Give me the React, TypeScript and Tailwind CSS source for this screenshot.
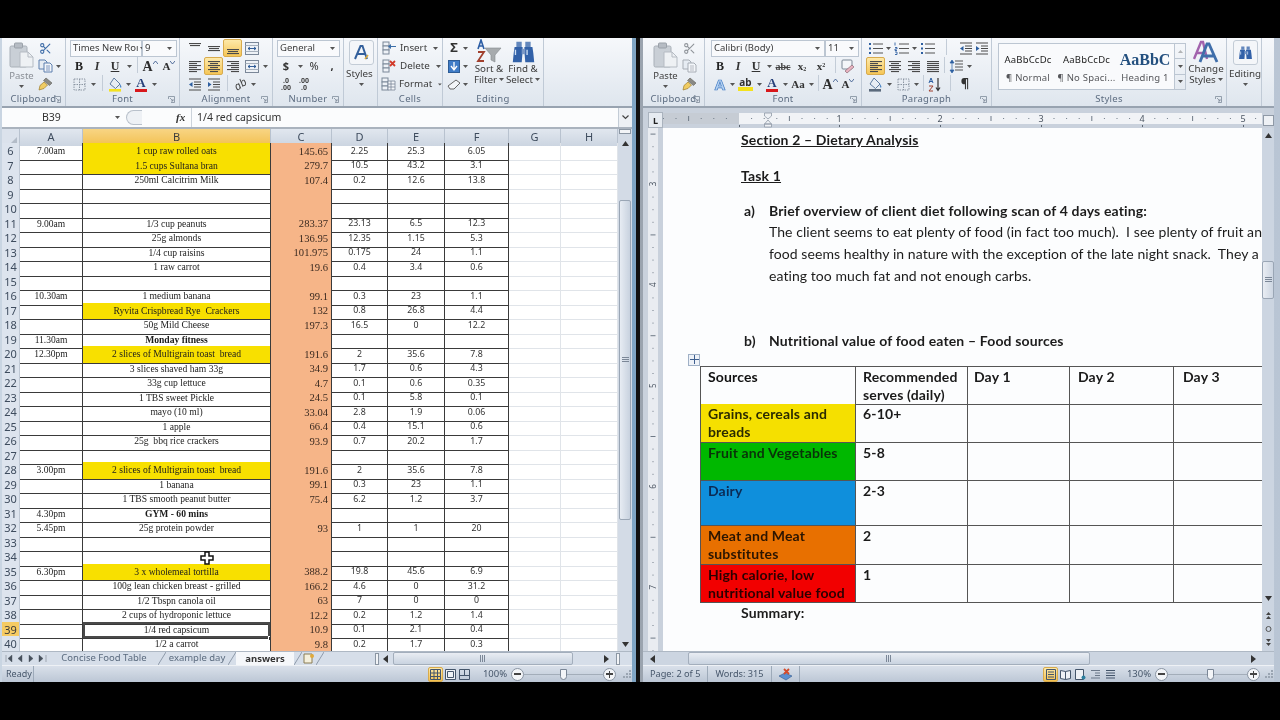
import React from 'react';
import { Scissors } from 'lucide-react';

const ui = 'font-["Noto_Sans",sans-serif]';

const Caret = ({ className = '' }: { className?: string }) => (
  <svg width="5" height="3" viewBox="0 0 5 3" className={className}>
    <path d="M0 0h5L2.5 3z" fill="#555" />
  </svg>
);

const Cell = ({ w = 'w-[18px]', active, children }: { w?: string; active?: boolean; children?: React.ReactNode }) => (
  <div
    className={`${w} h-[18px] flex items-center justify-center shrink-0 rounded-[2px] ${
      active ? 'bg-gradient-to-b from-[#fde9a8] to-[#f5c655] border border-[#d8ab4d]' : ''
    }`}
  >
    {children}
  </div>
);

const CaretCell = ({ w = 'w-[10px]' }: { w?: string }) => (
  <Cell w={w}>
    <Caret />
  </Cell>
);

const Sep = ({ w = 'w-[8px]' }: { w?: string }) => (
  <div className={`${w} h-[18px] flex justify-center shrink-0`}>
    <div className="w-px h-[16px] bg-[#c3ccd7]" />
  </div>
);

const Lines = ({ kind, color = '#4a4a4a' }: { kind: string; color?: string }) => {
  const rows: Record<string, [number, number, number][]> = {
    top: [[1, 1, 12], [2, 3, 10]],
    mid: [[1, 4, 12], [2, 6, 10], [1, 8, 12]],
    bot: [[1, 7, 12], [2, 9, 10], [1, 11, 12]],
    left: [[1, 1, 12], [1, 3, 8], [1, 5, 12], [1, 7, 8], [1, 9, 12], [1, 11, 8]],
    center: [[1, 1, 12], [3, 3, 8], [1, 5, 12], [3, 7, 8], [1, 9, 12], [3, 11, 8]],
    right: [[1, 1, 12], [5, 3, 8], [1, 5, 12], [5, 7, 8], [1, 9, 12], [5, 11, 8]],
    just: [[1, 1, 12], [1, 3, 12], [1, 5, 12], [1, 7, 12], [1, 9, 12], [1, 11, 12]],
  };
  return (
    <svg width="14" height="13" viewBox="0 0 14 13">
      {rows[kind].map(([x, y, w], i) => (
        <rect key={i} x={x} y={y} width={w} height="1.1" fill={color} />
      ))}
    </svg>
  );
};

const PasteIcon = () => (
  <svg width="28" height="26" viewBox="0 0 28 26">
    <rect x="2" y="4" width="17" height="21" rx="1.5" fill="#c9cfd6" stroke="#a9b0b8" />
    <rect x="6.5" y="1" width="8" height="5" rx="1" fill="#b6bcc4" stroke="#9aa1a9" />
    <path d="M12 10h8l5 5v10H12z" fill="#eef1f4" stroke="#b5bbc3" />
    <path d="M20 10v5h5" fill="none" stroke="#b5bbc3" />
  </svg>
);

const CopyIcon = ({ color = '#6f8fb8' }: { color?: string }) => (
  <svg width="15" height="14" viewBox="0 0 15 14">
    <path d="M1 1h6l2 2v7H1z" fill="#e6ecf3" stroke={color} />
    <path d="M6 4h6l2 2v7H6z" fill="#f3f6fa" stroke={color} />
    <path d="M8 7h4M8 9h4M8 11h4" stroke={color} strokeWidth=".8" />
  </svg>
);

const Painter = () => (
  <svg width="15" height="15" viewBox="0 0 15 15">
    <path d="M8 1l6 5-2.5 2.5-6-5z" fill="#8a8a86" stroke="#5f5f5a" strokeWidth=".6" />
    <path d="M6 5L2 8.5 1 13l5-1.5 3.5-3.5z" fill="#f0cc63" stroke="#9d7d2a" strokeWidth=".7" />
  </svg>
);

const BorderIcon = () => (
  <svg width="13" height="13" viewBox="0 0 13 13" fill="none" stroke="#8c96a3" strokeWidth="1" strokeDasharray="1.5 1">
    <rect x="1" y="1" width="11" height="11" />
    <path d="M6.5 1v11M1 6.5h11" />
  </svg>
);

const Bucket = ({ bar = '#f4e21d' }: { bar?: string }) => (
  <svg width="15" height="15" viewBox="0 0 15 15">
    <path d="M6 1l6 6-4.5 4.5L2 7z" fill="#e8edf3" stroke="#4f6f96" strokeWidth=".9" />
    <path d="M12 7c1 1.5 2 3 1.2 3.6S11.4 9.6 12 7z" fill="#4f88c6" />
    <rect x="1" y="12" width="12" height="2.6" fill={bar} />
  </svg>
);

const FontColor = () => (
  <div className={`flex flex-col items-center leading-none font-["Liberation_Serif",serif]`}>
    <span className="text-[13px] font-bold text-[#27407a] leading-[11px]">A</span>
    <span className="w-[12px] h-[3px] bg-[#d8171b] mt-px" />
  </div>
);

const GrowFont = ({ small }: { small?: boolean }) => (
  <div className="flex items-start">
    <span className={`font-["Liberation_Serif",serif] font-bold text-[#2d2d2d] ${small ? 'text-[11px]' : 'text-[14px]'} leading-[13px]`}>A</span>
    <svg width="5" height="3" viewBox="0 0 5 3" className="mt-px">
      <path d={small ? 'M0 0l2.5 3L5 0' : 'M0 3l2.5-3L5 3'} fill="none" stroke="#2e4f85" strokeWidth=".8" />
    </svg>
  </div>
);

const Merge = () => (
  <svg width="14" height="13" viewBox="0 0 14 13">
    <rect x="0.5" y="0.5" width="13" height="12" fill="#eef2f7" stroke="#7a8798" />
    <path d="M3 6.5h8M3 6.5l2-1.5M3 6.5l2 1.5M11 6.5l-2-1.5M11 6.5l-2 1.5" stroke="#1f4f8f" strokeWidth=".9" fill="none" />
    <path d="M.5 3.5h13M.5 9.5h13" stroke="#a6b0bc" />
  </svg>
);

const Indent = ({ out }: { out?: boolean }) => (
  <svg width="14" height="13" viewBox="0 0 14 13">
    <path d="M1 1h12M6 4h7M6 6.5h7M6 9h7M1 12h12" stroke="#4a4a4a" strokeWidth="1.1" />
    <path d={out ? 'M4.5 4L1 6.5 4.5 9z' : 'M1 4l3.5 2.5L1 9z'} fill="#2c5ea0" />
  </svg>
);

const Label = ({ text, launcher = true }: { text: string; launcher?: boolean }) => (
  <div className={`h-[14px] flex items-center justify-center relative text-[9.5px] tracking-[0.3px] text-[#5c6c80] ${ui}`}>
    {text}
    {launcher && (
      <svg width="7" height="7" viewBox="0 0 7 7" className="absolute right-[4px] top-[4px]" fill="none" stroke="#7f8c9b">
        <path d="M.5 3V.5H6.5V6.5H3M2 2l3 3M3 5h2V3" strokeWidth=".8" />
      </svg>
    )}
  </div>
);

const Group = ({ w, label, launcher, pad = 'pl-[4px]', children }: { w: string; label: string; launcher?: boolean; pad?: string; children: React.ReactNode }) => (
  <div className={`${w} shrink-0 flex flex-col border-r border-[#c0cad6]`}>
    <div className={`h-[54px] pt-px ${pad}`}>{children}</div>
    <Label text={label} launcher={launcher} />
  </div>
);

const Row = ({ children, className = '' }: { children: React.ReactNode; className?: string }) => (
  <div className={`flex items-center h-[18px] ${className}`}>{children}</div>
);

const Combo = ({ text, w, font = 'text-[9.5px]' }: { text: string; w: string; font?: string }) => (
  <div className={`${w} h-[17px] bg-[#f9fafc] border border-[#bcc6d2] flex items-center justify-between pl-[2px] pr-[4px] gap-[2px] text-[#3a3a3a] ${font} ${ui} shrink-0`}>
    <span className="whitespace-nowrap">{text}</span>
    <Caret className="shrink-0" />
  </div>
);

const ClipboardGroup = ({ w, muted }: { w: string; muted?: boolean }) => (
  <Group w={w} label="Clipboard" pad={muted ? 'pl-[5px]' : 'pl-[2px]'}>
    <div className="flex">
      <div className="w-[35px] flex flex-col items-center">
        <div className="mt-[3px] h-[27px]">
          <PasteIcon />
        </div>
        <span className={`text-[9.5px] leading-[13px] ${muted ? 'text-[#3f3f3f]' : 'text-[#8a8f96]'} ${ui}`}>Paste</span>
        <Caret className="mt-[3px]" />
      </div>
      <div className="flex flex-col -ml-[3px]">
        <Row><Cell><Scissors size={13} className={muted ? 'text-[#8f949a]' : 'text-[#3f6da8]'} /></Cell></Row>
        <Row><Cell><CopyIcon color={muted ? '#a7adb5' : '#5d7fae'} /></Cell>{!muted && <CaretCell w="w-[8px]" />}</Row>
        <Row><Cell><Painter /></Cell></Row>
      </div>
    </div>
  </Group>
);

const Binoculars = ({ size = 28, color = '#3261a8' }: { size?: number; color?: string }) => (
  <svg width={size} height={size} viewBox="0 0 28 28">
    <path d="M6 3h6v6H6zM16 3h6v6h-6z" fill={color} opacity=".75" />
    <path d="M4 9h9v5l-1 12H2l1-10zM15 9h9l1 7 1 10H16l-1-12z" fill={color} />
    <path d="M12 11h4v6h-4z" fill="#7c99c6" />
    <path d="M5 12v6M18 12v6" stroke="#cfe0f5" strokeWidth="1.5" />
  </svg>
);

const SmallLabelBtn = ({ icon, text }: { icon: React.ReactNode; text: string }) => (
  <Row className="gap-[3px]">
    <div className="w-[16px] flex justify-center">{icon}</div>
    <span className={`text-[9.8px] text-[#3b3b3b] ${ui}`}>{text}</span>
    <Caret className="ml-[3px]" />
  </Row>
);

const SheetIcon = ({ kind }: { kind: 'insert' | 'delete' | 'format' }) => (
  <svg width="15" height="14" viewBox="0 0 15 14">
    <rect x="1" y="1" width="6" height="4" fill="#eef2f7" stroke="#7a8798" />
    <rect x="1" y="5" width="6" height="4" fill="#eef2f7" stroke="#7a8798" />
    <rect x="1" y="9" width="6" height="4" fill="#eef2f7" stroke="#7a8798" />
    {kind === 'insert' && <path d="M14 5H9V3l-3 2.5L9 8V6h5z" fill="#3b6ea8" />}
    {kind === 'delete' && <path d="M8 2l5 5m0-5L8 7" stroke="#d23a2a" strokeWidth="1.8" />}
    {kind === 'format' && <path d="M7 4h7v9H7z M7 7h7 M7 10h7 M10 4v9" fill="#f4f6f9" stroke="#7a8798" strokeWidth=".8" />}
  </svg>
);

const ExcelRibbon = () => (
  <div className="h-[70px] flex bg-gradient-to-b from-[#f6f8fb] to-[#dfe6ee] border-b-2 border-[#98a3b0] shrink-0">
    <ClipboardGroup w="w-[64px]" />
    <Group w="w-[114px]" label="Font">
      <div className="flex h-[18px] items-end">
        <Combo text="Times New Roı" w="w-[72px]" />
        <Combo text="9" w="w-[35px]" />
      </div>
      <Row>
        <Cell><span className={`text-[12px] font-bold font-["Liberation_Serif",serif] text-[#222]`}>B</span></Cell>
        <Cell><span className={`text-[12px] font-bold italic font-["Liberation_Serif",serif] text-[#333]`}>I</span></Cell>
        <Cell><span className={`text-[12px] font-bold underline font-["Liberation_Serif",serif] text-[#333]`}>U</span></Cell>
        <CaretCell />
        <Sep w="w-[6px]" />
        <Cell w="w-[20px]"><GrowFont /></Cell>
        <Cell><GrowFont small /></Cell>
      </Row>
      <Row>
        <Cell><BorderIcon /></Cell>
        <CaretCell />
        <Sep />
        <Cell><Bucket /></Cell>
        <CaretCell w="w-[8px]" />
        <Cell><FontColor /></Cell>
        <CaretCell w="w-[8px]" />
      </Row>
    </Group>
    <Group w="w-[93px]" label="Alignment" pad="pl-[5px]">
      <Row>
        <Cell w="w-[19px]"><Lines kind="top" /></Cell>
        <Cell w="w-[19px]"><Lines kind="mid" /></Cell>
        <Cell w="w-[19px]" active><Lines kind="bot" /></Cell>
        <Cell w="w-[19px]"><Merge /></Cell>
      </Row>
      <Row>
        <Cell w="w-[19px]"><Lines kind="left" /></Cell>
        <Cell w="w-[19px]" active><Lines kind="center" /></Cell>
        <Cell w="w-[19px]"><Lines kind="right" /></Cell>
        <Cell w="w-[19px]"><Merge /></Cell>
        <CaretCell w="w-[8px]" />
      </Row>
      <Row>
        <Cell w="w-[19px]"><Indent out /></Cell>
        <Cell w="w-[19px]"><Indent /></Cell>
        <Sep />
        <Cell><span className={`text-[11px] italic text-[#444] rotate-[-35deg] ${ui}`}>ab</span></Cell>
        <CaretCell w="w-[8px]" />
      </Row>
    </Group>
    <Group w="w-[71px]" label="Number">
      <div className="flex h-[18px] items-end">
        <Combo text="General" w="w-[63px]" />
      </div>
      <Row>
        <Cell><span className={`text-[11px] font-bold text-[#333] ${ui}`}>$</span></Cell>
        <CaretCell />
        <Cell><span className={`text-[11px] text-[#333] ${ui}`}>%</span></Cell>
        <Cell><span className={`text-[11px] font-bold text-[#333] ${ui}`}>,</span></Cell>
      </Row>
      <Row>
        <Cell><span className={`text-[7px] leading-[7px] font-bold text-[#444] text-center ${ui}`}>.0<br />.00</span></Cell>
        <Cell><span className={`text-[7px] leading-[7px] font-bold text-[#444] text-center ${ui}`}>.00<br />.0</span></Cell>
      </Row>
    </Group>
    <Group w="w-[34px]" label="" launcher={false} pad="pl-[5px]">
      <div className="w-[25px] h-[25px] mt-[1px] rounded-[3px] border border-[#c3ccd6] bg-[#f4f6f9] flex items-center justify-center">
        <svg width="17" height="17" viewBox="0 0 17 17" fill="none">
          <path d="M2 15L7.5 2h2L14 15M4.5 10h7" stroke="#34609c" strokeWidth="2" />
          <path d="M12 15l3-4" stroke="#d9a93f" strokeWidth="1.5" />
        </svg>
      </div>
      <div className={`text-[9.8px] leading-[13px] mt-[2px] text-[#3b3b3b] -ml-[3px] ${ui}`}>Styles</div>
      <Caret className="mt-[3px] ml-[10px]" />
    </Group>
    <Group w="w-[65px]" label="Cells" launcher={false} pad="pl-[3px]">
      <SmallLabelBtn icon={<SheetIcon kind="insert" />} text="Insert" />
      <SmallLabelBtn icon={<SheetIcon kind="delete" />} text="Delete" />
      <SmallLabelBtn icon={<SheetIcon kind="format" />} text="Format" />
    </Group>
    <Group w="w-[101px]" label="Editing" launcher={false} pad="pl-[4px]">
      <div className="flex">
        <div className="w-[26px] flex flex-col">
          <Row><Cell w="w-[14px]"><span className={`text-[13px] font-bold text-[#333] ${ui}`}>Σ</span></Cell><CaretCell w="w-[8px]" /></Row>
          <Row>
            <Cell w="w-[14px]">
              <svg width="12" height="13" viewBox="0 0 12 13"><rect x=".5" y=".5" width="11" height="12" fill="#3f7cc7" stroke="#2d5c96" /><path d="M6 2v7M3 6l3 4 3-4" stroke="#fff" strokeWidth="1.3" fill="none" /></svg>
            </Cell>
            <CaretCell w="w-[8px]" />
          </Row>
          <Row>
            <Cell w="w-[14px]">
              <svg width="14" height="11" viewBox="0 0 14 11"><path d="M9 1l4 3-6 6H3L1 7z" fill="#f3f5f8" stroke="#666" /></svg>
            </Cell>
            <CaretCell w="w-[8px]" />
          </Row>
        </div>
        <div className="w-[34px] flex flex-col items-center -ml-[1px]">
          <svg width="26" height="25" viewBox="0 0 26 25">
            <path d="M9 9h16l-6 7v7l-4-2v-5z" fill="#a7abae" stroke="#85898d" strokeWidth=".6" />
            <path d="M2 10L5 1l3 9M3 7h4" stroke="#2d5ea5" strokeWidth="1.6" fill="none" />
            <path d="M2 13h6l-6 9h6" stroke="#a1402e" strokeWidth="1.8" fill="none" />
          </svg>
          <span className={`text-[9.8px] leading-[10px] text-[#3b3b3b] whitespace-nowrap ${ui}`}>Sort &amp;</span>
          <span className={`text-[9.8px] leading-[11px] text-[#3b3b3b] whitespace-nowrap flex items-center gap-[2px] ${ui}`}>Filter <Caret /></span>
        </div>
        <div className="w-[34px] flex flex-col items-center">
          <Binoculars size={25} />
          <span className={`text-[9.8px] leading-[10px] text-[#3b3b3b] whitespace-nowrap ${ui}`}>Find &amp;</span>
          <span className={`text-[9.8px] leading-[11px] text-[#3b3b3b] whitespace-nowrap flex items-center gap-[2px] ${ui}`}>Select <Caret /></span>
        </div>
      </div>
    </Group>
  </div>
);

const FormulaBar = () => (
  <div className={`h-[21px] flex items-center bg-[#fbfcfd] border-b-2 border-[#aab3be] text-[#333] shrink-0 ${ui}`}>
    <div className="w-[112px] flex items-center pl-[40px] text-[10.5px]">B39</div>
    <Caret className="ml-[1px]" />
    <div className="ml-[6px] w-[16px] h-[15px] rounded-l-full border border-r-0 border-[#b9c1cb] bg-[#eef1f5] shrink-0" />
    <div className="ml-[34px] w-[15px] text-[11px] italic font-bold font-['Liberation_Serif',serif] shrink-0">fx</div>
    <div className="flex-1 pl-[5px] text-[10.5px] border-l border-[#ccd3db] h-full flex items-center">1/4 red capsicum</div>
    <div className="w-[14px] h-full flex items-center justify-center bg-[#edf0f4] border-l border-[#c3ccd6]">
      <svg width="7" height="5" viewBox="0 0 7 5"><path d="M.5 .5l3 3 3-3" fill="none" stroke="#444" strokeWidth="1.2" /></svg>
    </div>
  </div>
);

type SheetRow = { n: number; t?: string; f?: string; c?: string; d?: string; e?: string; g?: string; y?: boolean; b?: boolean };

const rows: SheetRow[] = [
  { n: 6, t: '7.00am', f: '1 cup raw rolled oats', c: '145.65', d: '2.25', e: '25.3', g: '6.05', y: true },
  { n: 7, f: '1.5 cups Sultana bran', c: '279.7', d: '10.5', e: '43.2', g: '3.1', y: true },
  { n: 8, f: '250ml Calcitrim Milk', c: '107.4', d: '0.2', e: '12.6', g: '13.8' },
  { n: 9 },
  { n: 10 },
  { n: 11, t: '9.00am', f: '1/3 cup peanuts', c: '283.37', d: '23.13', e: '6.5', g: '12.3' },
  { n: 12, f: '25g almonds', c: '136.95', d: '12.35', e: '1.15', g: '5.3' },
  { n: 13, f: '1/4 cup raisins', c: '101.975', d: '0.175', e: '24', g: '1.1' },
  { n: 14, f: '1 raw carrot', c: '19.6', d: '0.4', e: '3.4', g: '0.6' },
  { n: 15 },
  { n: 16, t: '10.30am', f: '1 medium banana', c: '99.1', d: '0.3', e: '23', g: '1.1' },
  { n: 17, f: 'Ryvita Crispbread Rye  Crackers', c: '132', d: '0.8', e: '26.8', g: '4.4', y: true },
  { n: 18, f: '50g Mild Cheese', c: '197.3', d: '16.5', e: '0', g: '12.2' },
  { n: 19, t: '11.30am', f: 'Monday fitness', b: true },
  { n: 20, t: '12.30pm', f: '2 slices of Multigrain toast  bread', c: '191.6', d: '2', e: '35.6', g: '7.8', y: true },
  { n: 21, f: '3 slices shaved ham 33g', c: '34.9', d: '1.7', e: '0.6', g: '4.3' },
  { n: 22, f: '33g cup lettuce', c: '4.7', d: '0.1', e: '0.6', g: '0.35' },
  { n: 23, f: '1 TBS sweet Pickle', c: '24.5', d: '0.1', e: '5.8', g: '0.1' },
  { n: 24, f: 'mayo (10 ml)', c: '33.04', d: '2.8', e: '1.9', g: '0.06' },
  { n: 25, f: '1 apple', c: '66.4', d: '0.4', e: '15.1', g: '0.6' },
  { n: 26, f: '25g  bbq rice crackers', c: '93.9', d: '0.7', e: '20.2', g: '1.7' },
  { n: 27 },
  { n: 28, t: '3.00pm', f: '2 slices of Multigrain toast  bread', c: '191.6', d: '2', e: '35.6', g: '7.8', y: true },
  { n: 29, f: '1 banana', c: '99.1', d: '0.3', e: '23', g: '1.1' },
  { n: 30, f: '1 TBS smooth peanut butter', c: '75.4', d: '6.2', e: '1.2', g: '3.7' },
  { n: 31, t: '4.30pm', f: 'GYM - 60 mins', b: true },
  { n: 32, t: '5.45pm', f: '25g protein powder', c: '93', d: '1', e: '1', g: '20' },
  { n: 33 },
  { n: 34 },
  { n: 35, t: '6.30pm', f: '3 x wholemeal tortilla', c: '388.2', d: '19.8', e: '45.6', g: '6.9', y: true },
  { n: 36, f: '100g lean chicken breast - grilled', c: '166.2', d: '4.6', e: '0', g: '31.2' },
  { n: 37, f: '1/2 Tbspn canola oil', c: '63', d: '7', e: '0', g: '0' },
  { n: 38, f: '2 cups of hydroponic lettuce', c: '12.2', d: '0.2', e: '1.2', g: '1.4' },
  { n: 39, f: '1/4 red capsicum', c: '10.9', d: '0.1', e: '2.1', g: '0.4' },
  { n: 40, f: '1/2 a carrot', c: '9.8', d: '0.2', e: '1.7', g: '0.3' },
];

const gridCols = 'grid grid-cols-[18px_63px_188px_61px_56px_57px_64px_52px_57px]';
const serif = 'font-["Liberation_Serif",serif]';
const line = 'border-b border-[#3a3a3a]';

const ColHeader = ({ t, on }: { t: string; on?: boolean }) => (
  <div
    className={`flex items-center justify-center text-[11px] border-r border-[#b8c2cf] ${
      on ? 'bg-gradient-to-b from-[#f8d583] to-[#f2c04d] text-[#3c3c3c]' : 'bg-gradient-to-b from-[#e1e7ef] to-[#ccd5e1] text-[#3e4c5e]'
    }`}
  >
    {t}
  </div>
);

const Sheet = () => (
  <div className="flex flex-1 min-h-0">
    <div className={`flex-1 min-w-0 flex flex-col overflow-hidden bg-white ${ui}`}>
      <div className={`${gridCols} h-[14px] shrink-0`}>
        <div className="bg-[#dbe2ec] border-r border-[#b8c2cf] flex items-end justify-end p-[2px]">
          <svg width="7" height="7" viewBox="0 0 7 7"><path d="M7 0v7H0z" fill="#b3bcc8" /></svg>
        </div>
        {['A', 'B', 'C', 'D', 'E', 'F', 'G', 'H'].map((c) => (
          <ColHeader key={c} t={c} on={c === 'B'} />
        ))}
      </div>
      <div className="overflow-hidden">
        {rows.map((r) => (
          <div key={r.n} className={`${gridCols} h-[14.5px] relative`}>
            <div
              className={`flex items-center justify-center text-[11px] border-b border-r border-[#bfc8d4] ${
                r.n === 39 ? 'bg-[#f6cb62] text-[#3a3a3a]' : 'bg-[#dde4ee] text-[#3e4c5e]'
              }`}
            >
              {r.n}
            </div>
            <div className={`flex items-center justify-center text-[9.5px] text-[#222] ${serif} ${line} border-r`}>{r.t}</div>
            <div
              className={`relative flex items-center justify-center whitespace-pre text-[9.6px] text-[#1c1c1c] ${serif} ${line} border-r ${
                r.y ? 'bg-[#f8e000]' : ''
              } ${r.b ? 'font-bold' : ''}`}
            >
              {r.f}
              {r.n === 39 && <div className="absolute inset-0 border-2 border-[#4a4a4a]" />}
              {r.n === 39 && <div className="absolute right-[-3px] bottom-[-3px] w-[5px] h-[5px] bg-[#333] border border-white" />}
              {r.n === 34 && (
                <svg width="14" height="14" viewBox="0 0 14 14" className="absolute left-[117px] top-[2px] z-10">
                  <path d="M5 1h4v4h4v4H9v4H5V9H1V5h4z" fill="#fff" stroke="#111" strokeWidth="1.5" />
                </svg>
              )}
            </div>
            <div className={`flex items-center justify-end pr-[3px] text-[10.6px] text-[#3a2a20] bg-[#f6b588] ${serif} border-r border-[#3a3a3a]`}>{r.c}</div>
            <div className={`flex items-center justify-center text-[8.8px] text-[#333] ${line} border-r`}>{r.d}</div>
            <div className={`flex items-center justify-center text-[8.8px] text-[#333] ${line} border-r`}>{r.e}</div>
            <div className={`flex items-center justify-center text-[8.8px] text-[#333] ${line} border-r`}>{r.g}</div>
            <div className="border-b border-r border-[#e0e4e9]" />
            <div className="border-b border-r border-[#e0e4e9]" />
          </div>
        ))}
      </div>
    </div>
    <div className="w-[14px] shrink-0 bg-[#d3dbe6] flex flex-col items-center">
      <div className="w-[12px] h-[5px] bg-[#f2f4f7] border border-[#8b96a3] shrink-0" />
      <svg width="7" height="5" viewBox="0 0 7 5" className="mt-[7px] shrink-0"><path d="M3.5 0L7 5H0z" fill="#333" /></svg>
      <div className="mt-[54px] w-[12px] h-[320px] rounded-[2px] bg-gradient-to-r from-[#e7ecf3] to-[#c8d2df] border border-[#9aa6b5] flex items-center justify-center shrink-0">
        <svg width="7" height="6" viewBox="0 0 7 6" stroke="#7b8797"><path d="M0 .5h7M0 2.5h7M0 4.5h7" /></svg>
      </div>
      <div className="flex-1" />
      <svg width="7" height="5" viewBox="0 0 7 5" className="mb-[4px] shrink-0"><path d="M0 0h7L3.5 5z" fill="#333" /></svg>
    </div>
  </div>
);

const ViewBtn = ({ active, children }: { active?: boolean; children: React.ReactNode }) => (
  <div
    className={`w-[15px] h-[15px] flex items-center justify-center shrink-0 ${
      active ? 'bg-gradient-to-b from-[#fde9a8] to-[#f3c04c] border border-[#d8ab4d] rounded-[2px]' : ''
    }`}
  >
    {children}
  </div>
);

const ZoomSlider = ({ pct, w, thumb }: { pct: string; w: string; thumb: string }) => (
  <div className={`flex items-center ${ui}`}>
    <span className="text-[9.5px] text-[#47576b] w-[32px] text-center">{pct}</span>
    <div className="w-[13px] h-[13px] rounded-full border border-[#8a95a3] bg-[#f3f5f8] flex items-center justify-center shrink-0">
      <div className="w-[7px] h-[1.5px] bg-[#444]" />
    </div>
    <div className={`${w} h-[13px] flex items-center relative`}>
      <div className="w-full h-px bg-[#a3adb9]" />
      <div className={`absolute ${thumb} top-[1px] w-[7px] h-[11px] bg-[#f3f5f8] border border-[#7a8696] rounded-b-[4px]`} />
    </div>
    <div className="w-[13px] h-[13px] rounded-full border border-[#8a95a3] bg-[#f3f5f8] flex items-center justify-center relative shrink-0">
      <div className="w-[7px] h-[1.5px] bg-[#444]" />
      <div className="absolute w-[1.5px] h-[7px] bg-[#444]" />
    </div>
  </div>
);

const Grip = () => (
  <svg width="10" height="10" viewBox="0 0 10 10" className="shrink-0" fill="#9aa5b2">
    <rect x="7" y="1" width="2" height="2" /><rect x="4" y="4" width="2" height="2" /><rect x="7" y="4" width="2" height="2" /><rect x="1" y="7" width="2" height="2" /><rect x="4" y="7" width="2" height="2" /><rect x="7" y="7" width="2" height="2" />
  </svg>
);

const TabSlant = () => (
  <svg width="8" height="13" viewBox="0 0 8 13" className="shrink-0"><path d="M0 13L8 0" stroke="#8f9bab" fill="none" /></svg>
);

const NavTri = ({ d }: { d: string }) => (
  <svg width="9" height="7" viewBox="0 0 9 7" className="shrink-0"><path d={d} fill="#47505c" stroke="#47505c" strokeWidth=".4" /></svg>
);

const SheetTabs = () => (
  <div className={`h-[14px] flex items-center bg-[#d6dee9] border-t border-[#aeb8c4] shrink-0 ${ui}`}>
    <div className="w-[48px] flex gap-[2px] pl-[3px]">
      <NavTri d="M1 0v7M7 0L3 3.5 7 7z" />
      <NavTri d="M6 0L2 3.5 6 7z" />
      <NavTri d="M2 0l4 3.5L2 7z" />
      <NavTri d="M1 0l4 3.5L1 7zM8 0v7" />
    </div>
    <div className="w-[108px] text-center text-[9.5px] text-[#5a6a7e]">Concise Food Table</div>
    <TabSlant />
    <div className="w-[62px] text-center text-[9.5px] text-[#5a6a7e]">example day</div>
    <TabSlant />
    <div className="w-[58px] h-full bg-[#f5f7fa] text-center text-[9.5px] font-bold text-[#333] leading-[13px]">answers</div>
    <TabSlant />
    <div className="w-[14px] flex justify-center">
      <svg width="12" height="11" viewBox="0 0 12 11"><path d="M1 1h8v9H1z" fill="#f5f0dc" stroke="#8a7c55" /><circle cx="9" cy="3" r="2" fill="#e0a93a" /></svg>
    </div>
    <TabSlant />
    <div className="w-[51px]" />
    <div className="w-[4px] h-[12px] bg-[#f2f4f7] border border-[#8b96a3] shrink-0" />
    <svg width="5" height="8" viewBox="0 0 5 8" className="ml-[4px] shrink-0"><path d="M5 0v8L0 4z" fill="#333" /></svg>
    <div className="ml-[5px] w-[180px] h-[13px] rounded-[2px] bg-gradient-to-b from-[#e9edf3] to-[#c9d3e0] border border-[#a3aebc] flex items-center justify-center shrink-0">
      <svg width="6" height="7" viewBox="0 0 6 7" stroke="#7b8797"><path d="M.5 0v7M2.5 0v7M4.5 0v7" /></svg>
    </div>
    <svg width="5" height="8" viewBox="0 0 5 8" className="ml-[31px] shrink-0"><path d="M0 0v8l5-4z" fill="#333" /></svg>
    <div className="ml-[7px] w-[4px] h-[12px] bg-[#f2f4f7] border border-[#8b96a3] shrink-0" />
  </div>
);

const StatusBg = 'h-[17px] flex items-center bg-gradient-to-b from-[#d9e0ea] to-[#bcc7d5] border-t border-[#eef1f5] shrink-0';

const ExcelStatus = () => (
  <div className={`${StatusBg} ${ui}`}>
    <div className="w-[32px] pl-[4px] text-[9px] text-[#47576b] border-r border-[#9daab9] h-full flex items-center">Ready</div>
    <div className="flex-1" />
    <ViewBtn active><svg width="11" height="11" viewBox="0 0 11 11" fill="none" stroke="#44556a"><path d="M.5.5h10v10H.5zM.5 4h10M.5 7.5h10M4 .5v10M7.5 .5v10" /></svg></ViewBtn>
    <div className="w-[14px] flex justify-center"><svg width="11" height="11" viewBox="0 0 11 11" fill="#eef1f5" stroke="#44556a"><path d="M.5.5h10v10H.5z" /><path d="M2.5 2.5h6v6h-6z" /></svg></div>
    <div className="w-[14px] flex justify-center"><svg width="11" height="11" viewBox="0 0 11 11" fill="none" stroke="#44556a"><path d="M.5.5h10v10H.5zM5.5 .5v6M.5 6.5h10" /></svg></div>
    <div className="w-[8px]" />
    <ZoomSlider pct="100%" w="w-[79px]" thumb="left-[36px]" />
    <div className="w-[16px] flex justify-end"><Grip /></div>
  </div>
);

const Excel = () => (
  <div className="w-[636px] shrink-0 flex flex-col pl-[2px] pr-[4px] bg-gradient-to-r from-[#c9d5e2] via-[#c9d5e2] to-[#7fa5c4]">
    <div className="flex-1 min-h-0 flex flex-col bg-white">
      <ExcelRibbon />
      <FormulaBar />
      <Sheet />
      <SheetTabs />
      <ExcelStatus />
    </div>
  </div>
);

const BulletIcon = ({ num }: { num?: boolean }) => (
  <svg width="15" height="13" viewBox="0 0 15 13">
    <path d="M5 2h10M5 6.5h10M5 11h10" stroke="#555" strokeWidth="1.1" />
    {num ? (
      <path d="M1 .5v3M1 5.5h2v1.5H1v1.5h2M1 10h2v2.5H1" stroke="#2c5ea0" fill="none" strokeWidth=".9" />
    ) : (
      <g fill="#2c5ea0"><rect x="1" y="1" width="2" height="2" /><rect x="1" y="5.5" width="2" height="2" /><rect x="1" y="10" width="2" height="2" /></g>
    )}
  </svg>
);

const StyleSample = ({ w, sample, name, className = '' }: { w: string; sample: string; name: string; className?: string }) => (
  <div className={`${w} shrink-0 flex flex-col items-center overflow-hidden`}>
    <div className={`h-[28px] pt-[4px] flex items-center whitespace-nowrap ${className}`}>{sample}</div>
    <div className={`text-[9.5px] leading-[12px] text-[#55565a] tracking-[0.2px] whitespace-nowrap ${ui}`}>{name}</div>
  </div>
);

const WordRibbon = () => (
  <div className="h-[70px] flex bg-gradient-to-b from-[#f6f8fb] to-[#dfe6ee] border-b-2 border-[#98a3b0] shrink-0">
    <ClipboardGroup w="w-[62px]" muted />
    <Group w="w-[157px]" label="Font" pad="pl-[6px]">
      <div className="flex h-[18px] items-end">
        <Combo text="Calibri (Body)" w="w-[114px]" />
        <Combo text="11" w="w-[34px]" />
      </div>
      <Row>
        <Cell><span className={`text-[12px] font-bold ${serif} text-[#222]`}>B</span></Cell>
        <Cell><span className={`text-[12px] font-bold italic ${serif} text-[#333]`}>I</span></Cell>
        <Cell><span className={`text-[12px] font-bold underline ${serif} text-[#333]`}>U</span></Cell>
        <CaretCell w="w-[8px]" />
        <Cell w="w-[20px]"><span className={`text-[10px] font-bold line-through text-[#444] ${serif}`}>abc</span></Cell>
        <Cell><span className={`text-[11px] font-bold text-[#333] ${serif}`}>x<sub className="text-[6px]">2</sub></span></Cell>
        <Cell w="w-[20px]"><span className={`text-[11px] font-bold text-[#333] ${serif}`}>x<sup className="text-[6px]">2</sup></span></Cell>
        <Sep w="w-[8px]" />
        <Cell>
          <svg width="15" height="15" viewBox="0 0 15 15"><rect x="1" y="1" width="10" height="9" rx="1" fill="#f4f6f9" stroke="#7d8896" /><path d="M6 14l7-6-2-2-7 6z" fill="#e9b3c0" stroke="#8c6a75" strokeWidth=".7" /></svg>
        </Cell>
      </Row>
      <Row>
        <Cell><span className={`text-[15px] font-bold leading-none text-[#b7d3f2] [-webkit-text-stroke:0.7px_#3c78c2] ${ui}`}>A</span></Cell>
        <CaretCell w="w-[7px]" />
        <Cell w="w-[19px]"><div className="flex flex-col items-center leading-none"><span className={`text-[10px] font-bold text-[#333] leading-[10px] ${ui}`}>ab</span><span className="w-[15px] h-[4px] bg-[#f4e21d]" /></div></Cell>
        <CaretCell w="w-[8px]" />
        <Cell><FontColor /></Cell>
        <CaretCell w="w-[8px]" />
        <Cell><span className={`text-[11px] font-bold text-[#333] ${serif}`}>Aa</span></Cell>
        <CaretCell w="w-[8px]" />
        <Sep w="w-[6px]" />
        <Cell><GrowFont /></Cell>
        <Cell><GrowFont small /></Cell>
      </Row>
    </Group>
    <Group w="w-[130px]" label="Paragraph" pad="pl-[4px]">
      <Row>
        <Cell><BulletIcon /></Cell>
        <CaretCell w="w-[8px]" />
        <Cell><BulletIcon num /></Cell>
        <CaretCell w="w-[8px]" />
        <Cell><BulletIcon /></Cell>
        <Sep w="w-[21px]" />
        <Cell><Indent out /></Cell>
        <Cell w="w-[14px]"><Indent /></Cell>
      </Row>
      <Row>
        <Cell w="w-[19px]" active><Lines kind="left" /></Cell>
        <Cell w="w-[19px]"><Lines kind="center" /></Cell>
        <Cell w="w-[19px]"><Lines kind="right" /></Cell>
        <Cell w="w-[19px]"><Lines kind="just" /></Cell>
        <Sep w="w-[5px]" />
        <Cell>
          <svg width="14" height="13" viewBox="0 0 14 13"><path d="M6 1h8M6 4h8M6 7h8M6 10h8" stroke="#555" /><path d="M3 0l2 3H1zM3 13l2-3H1zM3 3v7" fill="#2c5ea0" stroke="#2c5ea0" strokeWidth=".7" /></svg>
        </Cell>
        <CaretCell w="w-[8px]" />
      </Row>
      <Row>
        <Cell><Bucket bar="#5b6a7c" /></Cell>
        <CaretCell w="w-[10px]" />
        <Cell><BorderIcon /></Cell>
        <CaretCell w="w-[8px]" />
        <Sep w="w-[6px]" />
        <Cell>
          <svg width="14" height="15" viewBox="0 0 14 15" fill="none">
            <path d="M1 6l2-5 2 5M1.8 4.500h2.400" stroke="#2c5ea0" strokeWidth="1" />
            <path d="M1 9h4l-4 5h4" stroke="#a1402e" strokeWidth="1" />
            <path d="M10 1v12M8 10.5l2 3 2-3" stroke="#333" strokeWidth="1.2" />
          </svg>
        </Cell>
        <Sep w="w-[12px]" />
        <Cell><span className={`text-[13px] font-bold text-[#333] ${ui}`}>¶</span></Cell>
      </Row>
    </Group>
    <Group w="w-[235px]" label="Styles" pad="pl-[6px]">
      <div className="flex">
        <div className="mt-[4px] w-[177px] h-[47px] bg-[#f9fafc] border border-[#bcc6d2] flex shrink-0">
          <StyleSample w="w-[58px]" sample="AaBbCcDc" name="¶ Normal" className={`text-[9.5px] text-[#222] tracking-[0.2px] ${ui}`} />
          <StyleSample w="w-[59px]" sample="AaBbCcDc" name="¶ No Spaci..." className={`text-[9.5px] text-[#222] tracking-[0.2px] ${ui}`} />
          <StyleSample w="w-[58px]" sample="AaBbC" name="Heading 1" className={`text-[16px] font-bold text-[#24507f] ${serif}`} />
        </div>
        <div className="mt-[4px] w-[11px] h-[47px] flex flex-col border border-l-0 border-[#bcc6d2] shrink-0">
          <div className="flex-1 border-b border-[#bcc6d2] flex items-center justify-center"><Caret className="rotate-180 opacity-40" /></div>
          <div className="flex-1 border-b border-[#bcc6d2] flex items-center justify-center"><Caret /></div>
          <div className="flex-1 flex items-center justify-center"><Caret /></div>
        </div>
        <div className="w-[40px] flex flex-col items-center">
          <svg width="26" height="25" viewBox="0 0 26 25" fill="none">
            <path d="M1 20L8 3h2l4 17M3.5 14h9" stroke="#a263ad" strokeWidth="2.4" />
            <path d="M7 23L14 5h2l8 18M10 17h12" stroke="#3f6eaa" strokeWidth="2.8" />
          </svg>
          <span className={`text-[9.8px] leading-[10px] text-[#3b3b3b] ${ui}`}>Change</span>
          <span className={`text-[9.8px] leading-[11px] text-[#3b3b3b] flex items-center gap-[2px] ${ui}`}>Styles <Caret /></span>
        </div>
      </div>
    </Group>
    <Group w="w-[35px]" label="" launcher={false} pad="pl-[6px]">
      <div className="w-[25px] h-[25px] mt-[1px] rounded-[3px] border border-[#c3ccd6] bg-[#f4f6f9] flex items-center justify-center"><Binoculars size={15} /></div>
      <div className={`text-[9.8px] leading-[13px] mt-[2px] text-[#3b3b3b] -ml-[4px] ${ui}`}>Editing</div>
      <Caret className="mt-[3px] ml-[10px]" />
    </Group>
    <div className="flex-1" />
  </div>
);

const HRuler = () => (
  <div className="h-[16px] flex shrink-0">
    <div className="w-[15px] h-full border border-[#aab3be] bg-[#e6ebf1] flex items-center justify-center shrink-0">
      <span className={`text-[9px] font-bold leading-none ${ui} text-[#222]`}>L</span>
    </div>
    <svg width="599" height="16" viewBox="0 0 599 16" className="shrink-0">
      <rect x="0" y="1" width="599" height="11" fill="#f1f3f6" />
      <rect x="0" y="1" width="76" height="11" fill="#c6ccd4" />
      {Array.from({ length: 48 }).map((_, n) => {
        const i = n - 6;
        const x = 76 + i * 12.6;
        if (i % 8 === 0) return null;
        const tall = i % 4 === 0;
        return <rect key={n} x={x - 0.5} y={tall ? 4 : 6} width="1" height={tall ? 5 : 1} fill="#6f7a87" />;
      })}
      {['1', '2', '3', '4', '5'].map((d, i) => (
        <text key={d} x={176 + i * 101} y="10" fontSize="9" fill="#4c5663" textAnchor="middle" fontFamily="Noto Sans">{d}</text>
      ))}
      {[76, 176, 277, 378, 479, 580].map((x) => (
        <rect key={x} x={x} y="13" width="1" height="2" fill="#5d6772" />
      ))}
      <path d="M100.5 1h7v3l-3.5 3-3.5-3zM100.5 12l3.5-4 3.5 4zM100.5 12h7v3h-7z" fill="#eef1f5" stroke="#8f99a6" strokeWidth=".8" transform="translate(1 0)" />
    </svg>
    <div className="flex-1 flex items-center justify-center">
      <div className="w-[11px] h-[11px] border border-[#8f99a6] bg-[#eef1f5]" />
    </div>
  </div>
);

const VRuler = () => (
  <svg width="10" height="523" viewBox="0 0 10 523" className="shrink-0">
    <rect width="10" height="523" fill="#e9ecf1" />
    {Array.from({ length: 42 }).map((_, i) => {
      const y = 5.6 + i * 12.6;
      if (i % 8 === 4) {
        const label = (3 + (i - 4) / 8).toString();
        return (
          <text key={i} x="5" y={y + 3} fontSize="8" fill="#4c5663" textAnchor="middle" fontFamily="Noto Sans" transform={`rotate(-90 5 ${y})`}>{label}</text>
        );
      }
      if (i % 8 === 0) return <rect key={i} x="2.5" y={y} width="5" height="1" fill="#6f7a87" />;
      return <rect key={i} x="4.5" y={y} width="1" height="1" fill="#6f7a87" />;
    })}
  </svg>
);

const foodRows = [
  { h: 'h-[37px]', s: 'Sources', r: 'Recommended serves (daily)', d: ['Day 1', 'Day 2', 'Day 3'], bg: 'bg-transparent', fg: 'text-[#111]' },
  { h: 'h-[39px]', s: 'Grains, cereals and breads', r: '6-10+', bg: 'bg-[#f5e000]', fg: 'text-[#2b2b00]' },
  { h: 'h-[38px]', s: 'Fruit and  Vegetables', r: '5-8', bg: 'bg-[#00b800]', fg: 'text-[#093309]' },
  { h: 'h-[45px]', s: 'Dairy', r: '2-3', bg: 'bg-[#0f8fdc]', fg: 'text-[#0b2b55]' },
  { h: 'h-[39px]', s: 'Meat and Meat substitutes', r: '2', bg: 'bg-[#e87000]', fg: 'text-[#2b1500]' },
  { h: 'h-[38px]', s: 'High calorie, low nutritional value food', r: '1', bg: 'bg-[#f20000]', fg: 'text-[#2b0000]' },
];

const FoodTable = () => (
  <div className="relative mt-[13px] -ml-[1px] border-t border-l border-[#555]">
    <div className="absolute -left-[13px] -top-[13px] w-[12px] h-[12px] border border-[#9fb0c6] bg-[#eef2f8] flex items-center justify-center">
      <svg width="9" height="9" viewBox="0 0 9 9" stroke="#3e5f8f"><path d="M4.5 0v9M0 4.5h9" /></svg>
    </div>
    {foodRows.map((row) => (
      <div key={row.s} className={`grid grid-cols-[155px_112px_102px_104px_120px] ${row.h} font-bold text-[14px] tracking-[0.15px] leading-[18px] text-[#1a1a1a]`}>
        <div className={`${row.bg} ${row.fg} border-b border-r border-[#555] pl-[7px] pr-[6px] pt-px`}>{row.s}</div>
        <div className="border-b border-r border-[#555] pl-[7px] pr-[2px] pt-px">{row.r}</div>
        <div className="border-b border-r border-[#555] pl-[6px] pt-px">{row.d?.[0]}</div>
        <div className="border-b border-r border-[#555] pl-[8px] pt-px">{row.d?.[1]}</div>
        <div className="border-b border-[#555] pl-[9px] pt-px">{row.d?.[2]}</div>
      </div>
    ))}
  </div>
);

const lineCls = 'h-[21.8px] leading-[21.8px] whitespace-pre';
const boldLine = `${lineCls} font-bold tracking-[0.15px]`;

const Doc = () => (
  <div className={`flex-1 min-w-0 bg-[#fcfdfe] overflow-hidden text-[14px] font-["Lato",sans-serif] text-[#1c1c1c] pl-[38px]`}>
    <div className={`${boldLine} mt-[1px] ml-[40px] underline`}>Section 2 – Dietary Analysis</div>
    <div className={`${boldLine} mt-[14px] ml-[40px] underline`}>Task 1</div>
    <div className={`${boldLine} mt-[13px] ml-[43px] flex`}>
      <span className="w-[25px]">a)</span>Brief overview of client diet following scan of 4 days eating:
    </div>
    <div className={`${lineCls} tracking-[0.07px] ml-[68px]`}>The client seems to eat plenty of food (in fact too much).  I see plenty of fruit an</div>
    <div className={`${lineCls} tracking-[0.07px] ml-[68px]`}>food seems healthy in nature with the exception of the late night snack.  They a</div>
    <div className={`${lineCls} tracking-[0.07px] ml-[68px]`}>eating too much fat and not enough carbs.</div>
    <div className={`${boldLine} mt-[43px] ml-[43px] flex`}>
      <span className="w-[25px]">b)</span>Nutritional value of food eaten – Food sources
    </div>
    <div className="h-px" />
    <FoodTable />
    <div className={`${boldLine} -mt-px ml-[40px]`}>Summary:</div>
  </div>
);

const Word = () => (
  <div className="w-[640px] shrink-0 flex flex-col pl-[3px] pr-[6px] bg-gradient-to-r from-[#9aa3ae] via-[#c9d5e2] to-[#b9c5d4]">
    <div className="flex-1 min-h-0 flex flex-col">
      <WordRibbon />
      <div className="flex flex-col flex-1 min-h-0 bg-[#c9d1dc]">
        <div className="pl-[5px] pt-[4px]"><HRuler /></div>
        <div className="flex flex-1 min-h-0 pl-[5px]">
          <VRuler />
          <div className="w-[5px] shrink-0" />
          <Doc />
          <div className="w-[12px] shrink-0 bg-[#ccd5e1] flex flex-col items-center">
            <svg width="7" height="5" viewBox="0 0 7 5" className="mt-[5px] shrink-0"><path d="M3.5 0L7 5H0z" fill="#333" /></svg>
            <div className="mt-[123px] w-[12px] h-[38px] rounded-[2px] bg-gradient-to-r from-[#e9edf3] to-[#cdd6e2] border border-[#9aa6b5] flex items-center justify-center shrink-0">
              <svg width="7" height="6" viewBox="0 0 7 6" stroke="#7b8797"><path d="M0 .5h7M0 2.5h7M0 4.5h7" /></svg>
            </div>
            <div className="flex-1" />
            <svg width="7" height="5" viewBox="0 0 7 5" className="mb-[7px] shrink-0"><path d="M0 0h7L3.5 5z" fill="#333" /></svg>
            <svg width="7" height="42" viewBox="0 0 7 42" className="shrink-0 mb-[1px]" fill="#444">
              <path d="M3.5 4L6 7H1zM3.5 8L6 11H1z" />
              <circle cx="3.5" cy="21" r="2.5" fill="none" stroke="#555" />
              <path d="M1 31h5l-2.5 3zM1 35h5l-2.5 3z" />
            </svg>
          </div>
        </div>
        <div className="h-[14px] flex items-center bg-[#ccd5e1] pl-[7px] border-t border-[#aeb8c4] shrink-0">
          <svg width="5" height="8" viewBox="0 0 5 8" className="shrink-0"><path d="M5 0v8L0 4z" fill="#333" /></svg>
          <div className="ml-[33px] w-[402px] h-[13px] rounded-[2px] bg-gradient-to-b from-[#e9edf3] to-[#c9d3e0] border border-[#a3aebc] flex items-center justify-center shrink-0">
            <svg width="6" height="7" viewBox="0 0 6 7" stroke="#7b8797"><path d="M.5 0v7M2.5 0v7M4.5 0v7" /></svg>
          </div>
          <svg width="5" height="8" viewBox="0 0 5 8" className="ml-[161px] shrink-0"><path d="M0 0v8l5-4z" fill="#333" /></svg>
        </div>
      </div>
      <div className={`${StatusBg} ${ui} text-[9.2px] text-[#47576b]`}>
        <div className="pl-[7px] pr-[7px] h-full flex items-center border-r border-[#9daab9]">Page: 2 of 5</div>
        <div className="px-[7px] h-full flex items-center border-r border-[#9daab9]">Words: 315</div>
        <div className="w-[28px] h-full flex items-center justify-center border-r border-[#9daab9]">
          <svg width="15" height="15" viewBox="0 0 15 15"><path d="M1 9l6-3 7 3-6 4z" fill="#5b8fd0" stroke="#33598c" strokeWidth=".6" /><path d="M6 2l5 5m0-5L6 7" stroke="#d44a2a" strokeWidth="1.8" /></svg>
        </div>
        <div className="flex-1" />
        <ViewBtn active><svg width="10" height="11" viewBox="0 0 10 11" fill="none" stroke="#44556a"><path d="M.5.5h9v10h-9zM2 3h6M2 5.5h6M2 8h6" /></svg></ViewBtn>
        <div className="w-[15px] flex justify-center"><svg width="11" height="11" viewBox="0 0 11 11" fill="#eef1f5" stroke="#44556a"><path d="M.5 1.5l5 1 5-1v8l-5 1-5-1zM5.5 2.5v8" /></svg></div>
        <div className="w-[15px] flex justify-center"><svg width="11" height="11" viewBox="0 0 11 11" fill="#eef1f5" stroke="#44556a"><path d="M.5.5h8v10h-8z" /><circle cx="8.5" cy="8.5" r="2" fill="#2d7f9e" stroke="none" /></svg></div>
        <div className="w-[15px] flex justify-center"><svg width="11" height="11" viewBox="0 0 11 11" fill="none" stroke="#6b7889"><path d="M1 1.5h9M5 4h5M5 6.5h5M1 9h9" /></svg></div>
        <div className="w-[15px] flex justify-center"><svg width="11" height="11" viewBox="0 0 11 11" fill="none" stroke="#44556a"><path d="M1 1.5h9M1 4h9M1 6.5h9M1 9h9" /></svg></div>
        <div className="w-[5px]" />
        <ZoomSlider pct="130%" w="w-[79px]" thumb="left-[39px]" />
        <div className="w-[14px] flex justify-end"><Grip /></div>
      </div>
    </div>
  </div>
);

export default function App() {
  return (
    <div className="w-[1280px] h-[720px] bg-black flex flex-col overflow-hidden blur-[0.4px]">
      <div className="h-[38px] shrink-0" />
      <div className="h-[644px] flex shrink-0">
        <Excel />
        <div className="w-[4px] shrink-0 bg-[#111]" />
        <Word />
      </div>
    </div>
  );
}
